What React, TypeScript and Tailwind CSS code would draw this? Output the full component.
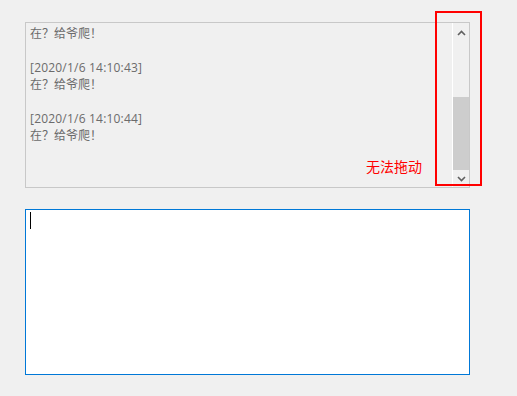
import React from "react";

const font = { fontFamily: '"Open Sans", "Noto Sans CJK SC", sans-serif' };

function Chevron({ up }: { up?: boolean }) {
  return (
    <svg width="9" height="6" viewBox="0 0 9 6" className="block">
      <path
        d={up ? "M1 5 L4.5 1.5 L8 5" : "M1 1 L4.5 4.5 L8 1"}
        fill="none"
        stroke="#606060"
        strokeWidth="1.6"
      />
    </svg>
  );
}

export default function App() {
  return (
    <div
      className="relative w-[517px] h-[396px] bg-[#f0f0f0] overflow-hidden pt-[22px] pl-[25px] flex flex-col gap-[21px]"
      style={font}
    >
      <div className="w-[445px] h-[166px] border border-[#c8c8c8] flex bg-[#f0f0f0]">
        <div className="flex-1 pl-[4px] pt-[2px] text-[12px] leading-[17px] text-[#6b6b6b] border-r border-white">
          <div>在？给爷爬！</div>
          <div className="h-[17px]" />
          <div className="tracking-[0.2px]">[2020/1/6 14:10:43]</div>
          <div>在？给爷爬！</div>
          <div className="h-[17px]" />
          <div className="tracking-[0.2px]">[2020/1/6 14:10:44]</div>
          <div>在？给爷爬！</div>
        </div>
        <div className="w-[16px] flex flex-col items-center">
          <div className="h-[17px] w-full flex items-center justify-center pt-[2px]">
            <Chevron up />
          </div>
          <div className="flex-1 w-full flex flex-col justify-end">
            <div className="h-[73px] w-full bg-[#cdcdcd]" />
          </div>
          <div className="h-[17px] w-full flex items-center justify-center">
            <Chevron />
          </div>
        </div>
      </div>
      <div className="w-[445px] h-[166px] border border-[#0078d7] bg-white pl-[4px] pt-[2px]">
        <div className="w-[1px] h-[17px] bg-black" />
      </div>
      <div className="absolute left-[366px] top-[157px] text-[14px] leading-[20px] text-[#ff0000]">
        无法拖动
      </div>
      <div className="absolute left-[435px] top-[11px] w-[47px] h-[175px] border-2 border-[#ff0000]" />
    </div>
  );
}
